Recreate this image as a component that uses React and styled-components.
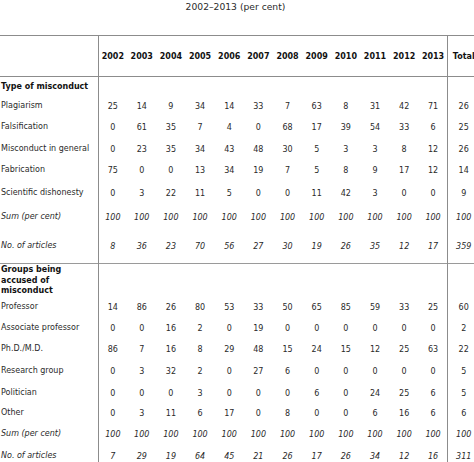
import React from "react";
import styled, { createGlobalStyle } from "styled-components";

const GlobalStyle = createGlobalStyle`
  html, body {
    margin: 0;
    padding: 0;
    background: #ffffff;
  }
  body {
    width: 474px;
    height: 462px;
    overflow: hidden;
    font-family: "DejaVu Sans", Verdana, sans-serif;
    color: #222222;
  }
`;

const YEARS = [2002, 2003, 2004, 2005, 2006, 2007, 2008, 2009, 2010, 2011, 2012, 2013];
const HUNDREDS = Array(13).fill(100);

const sections = [
  {
    heading: ["Type of misconduct"],
    headingHeight: 20,
    rows: [
      { label: "Plagiarism", h: 20, values: [25, 14, 9, 34, 14, 33, 7, 63, 8, 31, 42, 71, 26] },
      { label: "Falsification", h: 22, values: [0, 61, 35, 7, 4, 0, 68, 17, 39, 54, 33, 6, 25] },
      { label: "Misconduct in general", h: 21, values: [0, 23, 35, 34, 43, 48, 30, 5, 3, 3, 8, 12, 26] },
      { label: "Fabrication", h: 22, values: [75, 0, 0, 13, 34, 19, 7, 5, 8, 9, 17, 12, 14] },
      { label: "Scientific dishonesty", h: 23, values: [0, 3, 22, 11, 5, 0, 0, 11, 42, 3, 0, 0, 9] },
      { label: "Sum (per cent)", h: 25, italic: true, values: HUNDREDS },
      { label: "No. of articles", h: 34, italic: true, values: [8, 36, 23, 70, 56, 27, 30, 19, 26, 35, 12, 17, 359] },
    ],
  },
  {
    heading: ["Groups being", "accused of", "misconduct"],
    headingHeight: 34,
    rows: [
      { label: "Professor", h: 20, values: [14, 86, 26, 80, 53, 33, 50, 65, 85, 59, 33, 25, 60] },
      { label: "Associate professor", h: 21, values: [0, 0, 16, 2, 0, 19, 0, 0, 0, 0, 0, 0, 2] },
      { label: "Ph.D./M.D.", h: 21, values: [86, 7, 16, 8, 29, 48, 15, 24, 15, 12, 25, 63, 22] },
      { label: "Research group", h: 23, values: [0, 3, 32, 2, 0, 27, 6, 0, 0, 0, 0, 0, 5] },
      { label: "Politician", h: 21, values: [0, 0, 0, 3, 0, 0, 0, 6, 0, 24, 25, 6, 5] },
      { label: "Other", h: 19, values: [0, 3, 11, 6, 17, 0, 8, 0, 0, 6, 16, 6, 6] },
      { label: "Sum (per cent)", h: 23, italic: true, values: HUNDREDS },
      { label: "No. of articles", h: 22, italic: true, values: [7, 29, 19, 64, 45, 21, 26, 17, 26, 34, 12, 16, 311] },
    ],
  },
];

const Page = styled.div`
  width: 480px;
`;

const Caption = styled.div`
  height: 35px;
  width: 474px;
  text-align: center;
  font-size: 9.2px;
  line-height: 14px;
  color: #2a2a2a;
  box-sizing: border-box;
  padding-right: 3px;
`;

const Table = styled.table`
  border-collapse: collapse;
  table-layout: fixed;
  width: 479px;
  border-top: 1px solid #8c8c8c;
  font-size: 8px;
`;

const LabelCol = styled.col`
  width: 98px;
`;

const YearCol = styled.col`
  width: 29.17px;
`;

const TotalCol = styled.col`
  width: 31px;
`;

const HeadCell = styled.th`
  height: 40px;
  padding: 0;
  font-weight: bold;
  color: #111111;
  text-align: center;
  vertical-align: middle;
  border-bottom: 1px solid #8c8c8c;
  border-right: ${(p) => (p.$divider ? "1px solid #8c8c8c" : "none")};
  white-space: nowrap;
`;

const Row = styled.tr`
  height: ${(p) => p.$h}px;
  border-top: ${(p) => (p.$ruled ? "1px solid #9a9a9a" : "none")};
`;

const Label = styled.td`
  padding: 0 0 0 1px;
  text-align: left;
  vertical-align: middle;
  white-space: nowrap;
  font-weight: ${(p) => (p.$bold ? "bold" : "normal")};
  font-style: ${(p) => (p.$italic ? "italic" : "normal")};
  color: ${(p) => (p.$bold ? "#111111" : "#2a2a2a")};
  line-height: 10.5px;
  border-right: 1px solid #8c8c8c;
`;

const Num = styled.td`
  padding: 0;
  text-align: center;
  vertical-align: middle;
  white-space: nowrap;
  font-style: ${(p) => (p.$italic ? "italic" : "normal")};
  color: #2a2a2a;
  border-right: ${(p) => (p.$divider ? "1px solid #8c8c8c" : "none")};
`;

function DataRow({ row }) {
  return (
    <Row $h={row.h}>
      <Label $italic={row.italic}>{row.label}</Label>
      {row.values.map((v, i) => (
        <Num key={i} $italic={row.italic} $divider={i === 11}>
          {v}
        </Num>
      ))}
    </Row>
  );
}

function SectionRows({ section, ruled }) {
  return (
    <>
      <Row $h={section.headingHeight} $ruled={ruled}>
        <Label $bold>
          {section.heading.map((line, i) => (
            <React.Fragment key={i}>
              {i > 0 && <br />}
              {line}
            </React.Fragment>
          ))}
        </Label>
        {Array.from({ length: 13 }).map((_, i) => (
          <Num key={i} $divider={i === 11} />
        ))}
      </Row>
      {section.rows.map((row) => (
        <DataRow key={row.label} row={row} />
      ))}
    </>
  );
}

export default function App() {
  return (
    <Page>
      <GlobalStyle />
      <Caption>2002–2013 (per cent)</Caption>
      <Table>
        <colgroup>
          <LabelCol />
          {YEARS.map((y) => (
            <YearCol key={y} />
          ))}
          <TotalCol />
        </colgroup>
        <thead>
          <tr>
            <HeadCell $divider />
            {YEARS.map((y) => (
              <HeadCell key={y} $divider={y === 2013}>
                {y}
              </HeadCell>
            ))}
            <HeadCell>Total</HeadCell>
          </tr>
        </thead>
        <tbody>
          {sections.map((s, i) => (
            <SectionRows key={i} section={s} ruled={i > 0} />
          ))}
        </tbody>
      </Table>
    </Page>
  );
}
